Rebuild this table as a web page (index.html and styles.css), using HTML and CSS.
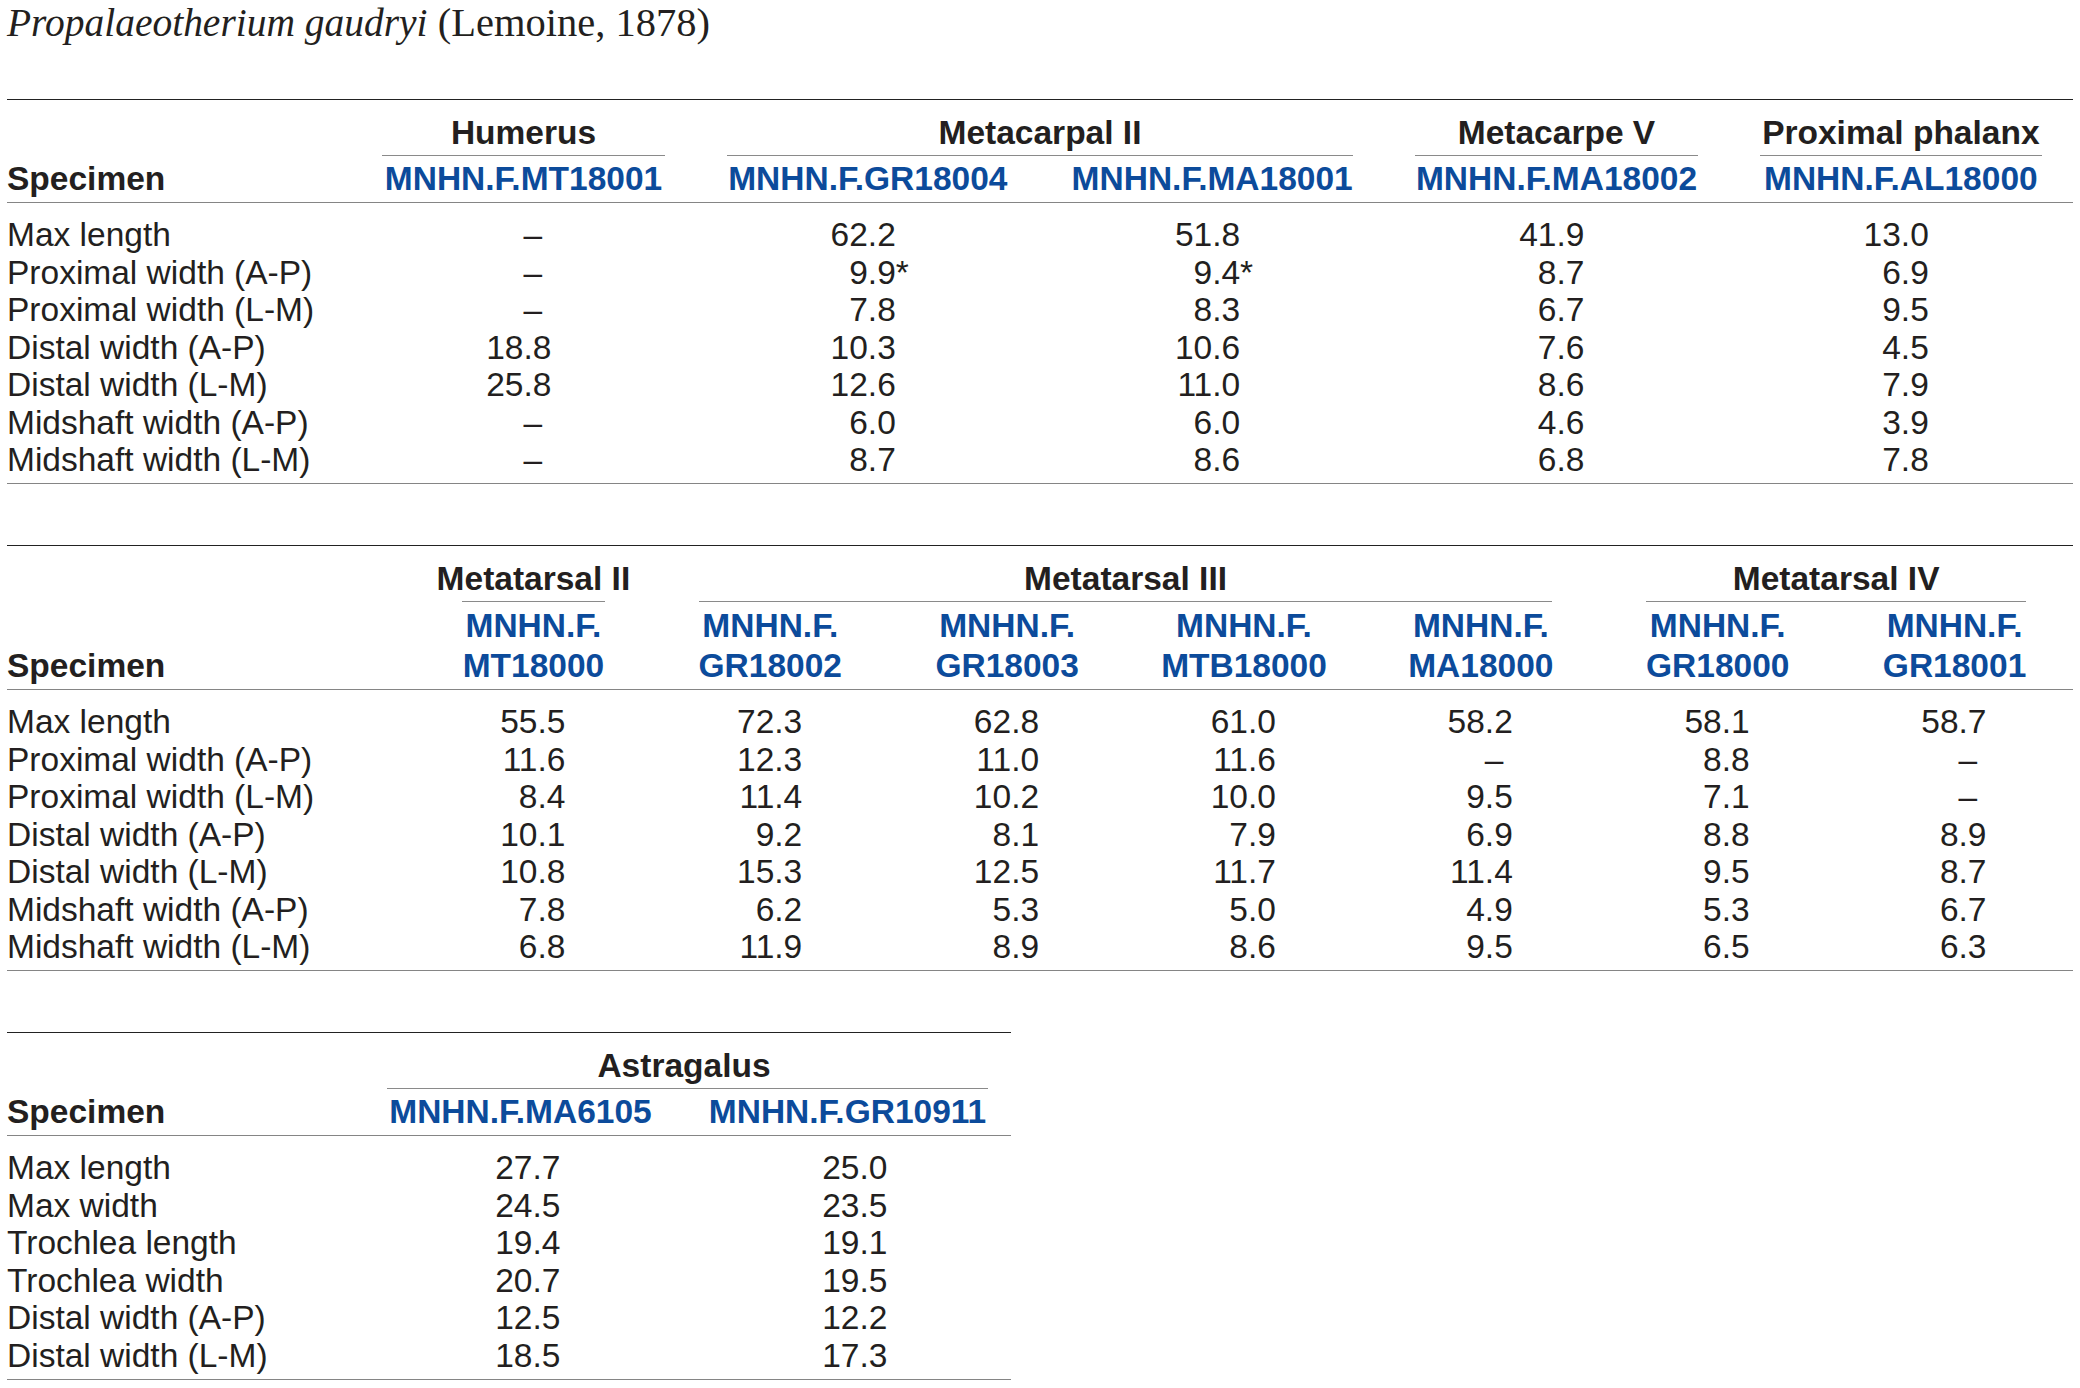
FILE: index.html
```html
<!DOCTYPE html>
<html lang="en">
<head>
<meta charset="utf-8">
<title>Propalaeotherium gaudryi measurements</title>
<link rel="stylesheet" href="styles.css">
</head>
<body>
<div class="page">
  <h1 class="title"><em>Propalaeotherium gaudryi</em> (Lemoine, 1878)</h1>

  <div class="tbl t1">
    <div class="row grp-row">
      <div class="cell"></div>
      <div class="grp s1">Humerus<div class="rule"></div></div>
      <div class="grp s2">Metacarpal II<div class="rule"></div></div>
      <div class="grp s1">Metacarpe V<div class="rule"></div></div>
      <div class="grp s1">Proximal phalanx<div class="rule"></div></div>
    </div>
    <div class="row id-row">
      <div class="spec">Specimen</div>
      <div class="id">MNHN.F.MT18001</div>
      <div class="id">MNHN.F.GR18004</div>
      <div class="id">MNHN.F.MA18001</div>
      <div class="id">MNHN.F.MA18002</div>
      <div class="id">MNHN.F.AL18000</div>
    </div>
    <div class="body">
      <div class="row"><div class="lab">Max length</div>
        <div class="v"><span class="i"></span><span class="f">–</span></div>
        <div class="v"><span class="i">62</span><span class="f">.2</span></div>
        <div class="v"><span class="i">51</span><span class="f">.8</span></div>
        <div class="v"><span class="i">41</span><span class="f">.9</span></div>
        <div class="v"><span class="i">13</span><span class="f">.0</span></div>
      </div>
      <div class="row"><div class="lab">Proximal width (A-P)</div>
        <div class="v"><span class="i"></span><span class="f">–</span></div>
        <div class="v"><span class="i">9</span><span class="f">.9*</span></div>
        <div class="v"><span class="i">9</span><span class="f">.4*</span></div>
        <div class="v"><span class="i">8</span><span class="f">.7</span></div>
        <div class="v"><span class="i">6</span><span class="f">.9</span></div>
      </div>
      <div class="row"><div class="lab">Proximal width (L-M)</div>
        <div class="v"><span class="i"></span><span class="f">–</span></div>
        <div class="v"><span class="i">7</span><span class="f">.8</span></div>
        <div class="v"><span class="i">8</span><span class="f">.3</span></div>
        <div class="v"><span class="i">6</span><span class="f">.7</span></div>
        <div class="v"><span class="i">9</span><span class="f">.5</span></div>
      </div>
      <div class="row"><div class="lab">Distal width (A-P)</div>
        <div class="v"><span class="i">18</span><span class="f">.8</span></div>
        <div class="v"><span class="i">10</span><span class="f">.3</span></div>
        <div class="v"><span class="i">10</span><span class="f">.6</span></div>
        <div class="v"><span class="i">7</span><span class="f">.6</span></div>
        <div class="v"><span class="i">4</span><span class="f">.5</span></div>
      </div>
      <div class="row"><div class="lab">Distal width (L-M)</div>
        <div class="v"><span class="i">25</span><span class="f">.8</span></div>
        <div class="v"><span class="i">12</span><span class="f">.6</span></div>
        <div class="v"><span class="i">11</span><span class="f">.0</span></div>
        <div class="v"><span class="i">8</span><span class="f">.6</span></div>
        <div class="v"><span class="i">7</span><span class="f">.9</span></div>
      </div>
      <div class="row"><div class="lab">Midshaft width (A-P)</div>
        <div class="v"><span class="i"></span><span class="f">–</span></div>
        <div class="v"><span class="i">6</span><span class="f">.0</span></div>
        <div class="v"><span class="i">6</span><span class="f">.0</span></div>
        <div class="v"><span class="i">4</span><span class="f">.6</span></div>
        <div class="v"><span class="i">3</span><span class="f">.9</span></div>
      </div>
      <div class="row"><div class="lab">Midshaft width (L-M)</div>
        <div class="v"><span class="i"></span><span class="f">–</span></div>
        <div class="v"><span class="i">8</span><span class="f">.7</span></div>
        <div class="v"><span class="i">8</span><span class="f">.6</span></div>
        <div class="v"><span class="i">6</span><span class="f">.8</span></div>
        <div class="v"><span class="i">7</span><span class="f">.8</span></div>
      </div>
    </div>
  </div>

  <div class="tbl t2">
    <div class="row grp-row">
      <div class="cell"></div>
      <div class="grp s1">Metatarsal II<div class="rule"></div></div>
      <div class="grp s4">Metatarsal III<div class="rule"></div></div>
      <div class="grp s2">Metatarsal IV<div class="rule"></div></div>
    </div>
    <div class="row id-row">
      <div class="spec">Specimen</div>
      <div class="id">MNHN.F.<br>MT18000</div>
      <div class="id">MNHN.F.<br>GR18002</div>
      <div class="id">MNHN.F.<br>GR18003</div>
      <div class="id">MNHN.F.<br>MTB18000</div>
      <div class="id">MNHN.F.<br>MA18000</div>
      <div class="id">MNHN.F.<br>GR18000</div>
      <div class="id">MNHN.F.<br>GR18001</div>
    </div>
    <div class="body">
      <div class="row"><div class="lab">Max length</div>
        <div class="v"><span class="i">55</span><span class="f">.5</span></div>
        <div class="v"><span class="i">72</span><span class="f">.3</span></div>
        <div class="v"><span class="i">62</span><span class="f">.8</span></div>
        <div class="v"><span class="i">61</span><span class="f">.0</span></div>
        <div class="v"><span class="i">58</span><span class="f">.2</span></div>
        <div class="v"><span class="i">58</span><span class="f">.1</span></div>
        <div class="v"><span class="i">58</span><span class="f">.7</span></div>
      </div>
      <div class="row"><div class="lab">Proximal width (A-P)</div>
        <div class="v"><span class="i">11</span><span class="f">.6</span></div>
        <div class="v"><span class="i">12</span><span class="f">.3</span></div>
        <div class="v"><span class="i">11</span><span class="f">.0</span></div>
        <div class="v"><span class="i">11</span><span class="f">.6</span></div>
        <div class="v"><span class="i"></span><span class="f">–</span></div>
        <div class="v"><span class="i">8</span><span class="f">.8</span></div>
        <div class="v"><span class="i"></span><span class="f">–</span></div>
      </div>
      <div class="row"><div class="lab">Proximal width (L-M)</div>
        <div class="v"><span class="i">8</span><span class="f">.4</span></div>
        <div class="v"><span class="i">11</span><span class="f">.4</span></div>
        <div class="v"><span class="i">10</span><span class="f">.2</span></div>
        <div class="v"><span class="i">10</span><span class="f">.0</span></div>
        <div class="v"><span class="i">9</span><span class="f">.5</span></div>
        <div class="v"><span class="i">7</span><span class="f">.1</span></div>
        <div class="v"><span class="i"></span><span class="f">–</span></div>
      </div>
      <div class="row"><div class="lab">Distal width (A-P)</div>
        <div class="v"><span class="i">10</span><span class="f">.1</span></div>
        <div class="v"><span class="i">9</span><span class="f">.2</span></div>
        <div class="v"><span class="i">8</span><span class="f">.1</span></div>
        <div class="v"><span class="i">7</span><span class="f">.9</span></div>
        <div class="v"><span class="i">6</span><span class="f">.9</span></div>
        <div class="v"><span class="i">8</span><span class="f">.8</span></div>
        <div class="v"><span class="i">8</span><span class="f">.9</span></div>
      </div>
      <div class="row"><div class="lab">Distal width (L-M)</div>
        <div class="v"><span class="i">10</span><span class="f">.8</span></div>
        <div class="v"><span class="i">15</span><span class="f">.3</span></div>
        <div class="v"><span class="i">12</span><span class="f">.5</span></div>
        <div class="v"><span class="i">11</span><span class="f">.7</span></div>
        <div class="v"><span class="i">11</span><span class="f">.4</span></div>
        <div class="v"><span class="i">9</span><span class="f">.5</span></div>
        <div class="v"><span class="i">8</span><span class="f">.7</span></div>
      </div>
      <div class="row"><div class="lab">Midshaft width (A-P)</div>
        <div class="v"><span class="i">7</span><span class="f">.8</span></div>
        <div class="v"><span class="i">6</span><span class="f">.2</span></div>
        <div class="v"><span class="i">5</span><span class="f">.3</span></div>
        <div class="v"><span class="i">5</span><span class="f">.0</span></div>
        <div class="v"><span class="i">4</span><span class="f">.9</span></div>
        <div class="v"><span class="i">5</span><span class="f">.3</span></div>
        <div class="v"><span class="i">6</span><span class="f">.7</span></div>
      </div>
      <div class="row"><div class="lab">Midshaft width (L-M)</div>
        <div class="v"><span class="i">6</span><span class="f">.8</span></div>
        <div class="v"><span class="i">11</span><span class="f">.9</span></div>
        <div class="v"><span class="i">8</span><span class="f">.9</span></div>
        <div class="v"><span class="i">8</span><span class="f">.6</span></div>
        <div class="v"><span class="i">9</span><span class="f">.5</span></div>
        <div class="v"><span class="i">6</span><span class="f">.5</span></div>
        <div class="v"><span class="i">6</span><span class="f">.3</span></div>
      </div>
    </div>
  </div>

  <div class="tbl t3">
    <div class="row grp-row">
      <div class="cell"></div>
      <div class="grp s2">Astragalus<div class="rule"></div></div>
    </div>
    <div class="row id-row">
      <div class="spec">Specimen</div>
      <div class="id">MNHN.F.MA6105</div>
      <div class="id">MNHN.F.GR10911</div>
    </div>
    <div class="body">
      <div class="row"><div class="lab">Max length</div>
        <div class="v"><span class="i">27</span><span class="f">.7</span></div>
        <div class="v"><span class="i">25</span><span class="f">.0</span></div>
      </div>
      <div class="row"><div class="lab">Max width</div>
        <div class="v"><span class="i">24</span><span class="f">.5</span></div>
        <div class="v"><span class="i">23</span><span class="f">.5</span></div>
      </div>
      <div class="row"><div class="lab">Trochlea length</div>
        <div class="v"><span class="i">19</span><span class="f">.4</span></div>
        <div class="v"><span class="i">19</span><span class="f">.1</span></div>
      </div>
      <div class="row"><div class="lab">Trochlea width</div>
        <div class="v"><span class="i">20</span><span class="f">.7</span></div>
        <div class="v"><span class="i">19</span><span class="f">.5</span></div>
      </div>
      <div class="row"><div class="lab">Distal width (A-P)</div>
        <div class="v"><span class="i">12</span><span class="f">.5</span></div>
        <div class="v"><span class="i">12</span><span class="f">.2</span></div>
      </div>
      <div class="row"><div class="lab">Distal width (L-M)</div>
        <div class="v"><span class="i">18</span><span class="f">.5</span></div>
        <div class="v"><span class="i">17</span><span class="f">.3</span></div>
      </div>
    </div>
  </div>
</div>
</body>
</html>
```

FILE: styles.css
```css
html, body {
  margin: 0;
  padding: 0;
  background: #ffffff;
}

.page {
  padding: 0 0 0 7px;
  color: #231f20;
  font-family: "Liberation Sans", Arial, sans-serif;
  font-size: 33.5px;
}

.title {
  margin: 0 0 53px 0;
  font-family: "Liberation Serif", "Times New Roman", serif;
  font-weight: normal;
  font-size: 40.5px;
  line-height: 46px;
  white-space: nowrap;
}

.title em {
  font-style: italic;
  font-size: 0.975em;
}

.tbl {
  border-top: 1.5px solid #222222;
  border-bottom: 1.5px solid #858585;
  margin-bottom: 61px;
}

.t1 { width: 2066px; --cols: repeat(6, 1fr); --inset-l: 31px; --inset-r: 31px; --shift: 0px; }
.t2 { width: 2066px; --cols: 408px repeat(7, 1fr); --inset-l: 47px; --inset-r: 47px; --shift: 8px; }
.t3 { width: 1004px; --cols: 350px repeat(2, 1fr); --inset-l: 30px; --inset-r: 23px; --shift: 24px; }

.row {
  display: grid;
  grid-template-columns: var(--cols);
  line-height: 37.5px;
  white-space: nowrap;
}

.grp-row {
  padding-top: 14px;
}

.grp {
  font-weight: bold;
  text-align: center;
}

.s1 { grid-column: span 1; }
.s2 { grid-column: span 2; }
.s4 { grid-column: span 4; }

.rule {
  margin: 3px var(--inset-r) 0 var(--inset-l);
  border-top: 1.5px solid #8a8a8a;
}

.id-row {
  padding-top: 3.5px;
  padding-bottom: 2.5px;
  border-bottom: 1.5px solid #858585;
  line-height: 40px;
  align-items: end;
}

.t2 .id-row {
  padding-top: 4px;
  padding-bottom: 3px;
}

.spec {
  font-weight: bold;
}

.id {
  font-weight: bold;
  color: #0c4b9b;
  text-align: center;
}

.body {
  padding: 13.5px 0 4.5px 0;
}

.v {
  display: grid;
  grid-template-columns: 1fr 1fr;
  padding-left: var(--shift);
}

.v .i {
  text-align: right;
}

.v .f {
  text-align: left;
}
```
